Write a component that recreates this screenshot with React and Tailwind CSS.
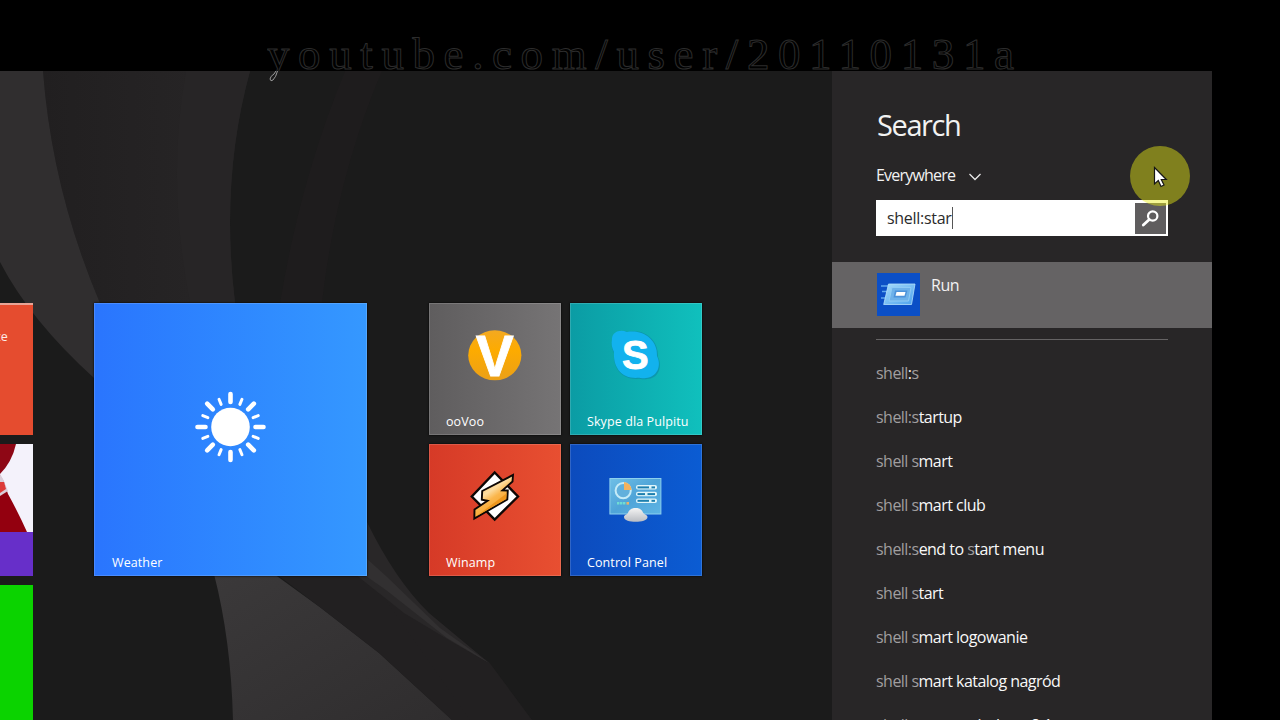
import React, { useState } from 'react';

const suggestions = [
  [['shell', 0], [':', 1], ['s', 0]],
  [['shell:s', 0], ['tartup', 1]],
  [['shell s', 0], ['mart', 1]],
  [['shell s', 0], ['mart club', 1]],
  [['shell:s', 0], ['end to ', 1], ['s', 0], ['tart menu', 1]],
  [['shell s', 0], ['tart', 1]],
  [['shell s', 0], ['mart logowanie', 1]],
  [['shell s', 0], ['mart katalog nagród', 1]],
  [['shell:s', 0], ['tartup windows 8.1', 1]],
];

const Wallpaper = () => (
  <svg className="absolute inset-0" width="832" height="649" viewBox="0 71 832 649">
    <defs>
      <linearGradient id="fold" x1="0" x2="1">
        <stop offset="0" stopColor="#211f20" />
        <stop offset="1" stopColor="#282627" />
      </linearGradient>
      <linearGradient id="leaf" x1="0" x2="1" y2="1">
        <stop offset="0" stopColor="#3b393a" />
        <stop offset="1" stopColor="#2f2d2e" />
      </linearGradient>
    </defs>
    <path d="M345 71H382Q336 180 322 303H280Q300 180 345 71Z" fill="#1e1c1d" />
    <path d="M43 71H250Q220 180 235 303H100Q52 190 43 71Z" fill="url(#fold)" />
    <path d="M186 71Q166 180 190 303H235Q220 180 250 71Z" fill="#272526" />
    <path d="M0 71H43Q52 190 100 303Q130 390 180 450L94 378Q30 320 0 262Z" fill="#302e2f" />
    <path d="M270 570Q430 680 452 720H532L489 662L366 570Z" fill="#222021" />
    <path d="M214 574Q231 640 233 720H452L379 653L321 608L274 574Z" fill="url(#leaf)" />
    <path d="M274 572L321 608L379 653L452 720H470L366 572Z" fill="#222021" />
    <path d="M366 520Q395 580 429 613L489 663L454 643L404 613L355 574Z" fill="#292728" />
    <path d="M366 558L386 576L440 628L489 663L447 638L386 590L366 576Z" fill="#323031" />
  </svg>
);

const WeatherIcon = () => (
  <svg width="72" height="72" viewBox="-35.5 -36 72 72" stroke="#fff" strokeLinecap="round">
    <circle r="19.3" fill="#fff" stroke="none" />
    {[0, 45, 90, 135, 180, 225, 270, 315].map((a) => (
      <g key={a}>
        <path d="M0 -25V-33" strokeWidth="4.6" transform={`rotate(${a})`} />
        <path d="M0 -24.5V-30" strokeWidth="3" transform={`rotate(${a + 22.5})`} />
      </g>
    ))}
  </svg>
);

const OovooIcon = () => (
  <svg width="56" height="56" viewBox="38 24 56 56">
    <defs>
      <linearGradient id="oovoo" y1="0" y2="1" x2="0">
        <stop offset="0" stopColor="#f3a921" />
        <stop offset="0.4" stopColor="#fdab00" />
        <stop offset="1" stopColor="#eba018" />
      </linearGradient>
    </defs>
    <ellipse cx="65.8" cy="52.3" rx="26.6" ry="25" fill="url(#oovoo)" />
    <text x="65.8" y="72.5" textAnchor="middle" fill="#fff" stroke="#fff" strokeWidth="0.8" fontSize="57" fontWeight="700" fontFamily="Liberation Sans, sans-serif">V</text>
  </svg>
);

const SkypeIcon = () => (
  <svg width="56" height="56" viewBox="38 24 56 56">
    <path d="M42 37C42 30 50 26 58 29C74 25 89 37 88 54C93 64 88 76 77 76C72 77 69 75 67 76C51 76 43 65 44 50C42 46 41 42 42 37Z" fill="#0b86a8" opacity="0.6" />
    <path d="M42 36C42 29 50 26 57 29C73 26 88 37 87 53C92 63 87 74 76 75C72 76 69 74 66 75C51 75 43 64 44 49C42 45 41 41 42 36Z" fill="#12b2ee" />
    <text x="65.4" y="66" textAnchor="middle" fill="#fff" stroke="#fff" strokeWidth="0.8" fontSize="40" fontWeight="700" fontFamily="Liberation Sans, sans-serif">S</text>
  </svg>
);

const WinampIcon = () => (
  <svg width="56" height="56" viewBox="38 24 56 56">
    <defs>
      <linearGradient id="bolt" x1="0" x2="0.6" y2="1">
        <stop offset="0" stopColor="#f6a02c" />
        <stop offset="0.45" stopColor="#fcdca0" />
        <stop offset="0.6" stopColor="#fbb64c" />
        <stop offset="1" stopColor="#f19a1a" />
      </linearGradient>
    </defs>
    <path d="M65.7 28.5L89 52.5L65.7 75.5L42.8 52.5Z" fill="#fff" stroke="#0d0705" strokeWidth="2.4" />
    <path d="M84 31L83.5 37.5L73.5 46.3L78.8 46.5L78.3 55.5L45.3 74.5L45.5 65.5L58.5 56.7L52.8 55.7L53.2 47Z" fill="url(#bolt)" stroke="#0d0705" strokeWidth="1.9" />
    <path d="M77.5 49.5L77 55L47 72.5Z" fill="#ee961c" />
  </svg>
);

const ControlPanelIcon = () => (
  <svg width="56" height="56" viewBox="38 24 56 56">
    <defs>
      <linearGradient id="screen" x1="0" x2="1" y2="1">
        <stop offset="0" stopColor="#6fbfe6" />
        <stop offset="0.5" stopColor="#4fa4d8" />
        <stop offset="1" stopColor="#5db4e4" />
      </linearGradient>
      <linearGradient id="dome" y1="0" y2="1" x2="0">
        <stop offset="0" stopColor="#f4f4f4" />
        <stop offset="1" stopColor="#b9bcc2" />
      </linearGradient>
    </defs>
    <rect x="39.9" y="34.5" width="51" height="35.5" fill="url(#screen)" stroke="#8dd0ee" />
    <circle cx="53.2" cy="46.6" r="7.6" fill="#62b0dc" stroke="#c5ebf7" strokeWidth="2" />
    <path d="M54 46V38A8 8 0 0 1 61.5 46Z" fill="#f6b25c" />
    {[43.3, 50, 56.7].map((y) => (
      <g key={y}>
        <rect x="66" y={y - 2.2} width="21" height="4.4" rx="2" fill="#e0f5fa" />
        <rect x="67.5" y={y - 0.9} width="17.5" height="2" fill="#1d7fae" />
        <rect x={y === 50 ? 75 : 79} y={y - 1.4} width="2.5" height="2.8" fill="#d9f3fa" />
      </g>
    ))}
    <path d="M47 59.3H56" stroke="#6fdcd3" strokeWidth="2.6" strokeDasharray="2.4 0.6" />
    <path d="M56.5 59.3H59" stroke="#e9b46a" strokeWidth="2.6" />
    <path d="M54 73C54 71 57 70.5 58 69C59 65.5 62 64 65.7 64S72 65.5 73.3 69C74.5 70.5 77.5 71 77.5 73C77.5 76.5 71.5 77.7 65.7 77.7S54 76.5 54 73Z" fill="url(#dome)" />
  </svg>
);

const RunIcon = () => (
  <svg className="bg-[#0b4fc6]" width="43" height="43" viewBox="0 0 43 43">
    <defs>
      <linearGradient id="run" x1="0" x2="1" y2="1">
        <stop offset="0" stopColor="#a6dbfa" />
        <stop offset="1" stopColor="#4da3ee" />
      </linearGradient>
    </defs>
    <path d="M4 13H13M5 18.5H12M4 25H11" stroke="#5ea6ee" strokeWidth="1.3" />
    <path d="M11.5 11H38L34.5 31.5H6.7Z" fill="url(#run)" stroke="#b5e2fb" strokeWidth="0.8" />
    <path d="M15 14.5H34L31.5 28H12Z" fill="#6db1ea" stroke="#8fcbf5" strokeWidth="1" />
    <path d="M18 17.5H30.5L28.5 24.5H16.5Z" fill="#4c92da" />
    <path d="M19.5 19H28.5L27.5 22.7H18.5Z" fill="#fff" />
  </svg>
);

const Tile = ({ label, className, children }) => (
  <div className={`flex h-[132px] w-[132px] flex-col items-center pt-6 shadow-[0_0_2px_#000] outline outline-1 -outline-offset-1 outline-white/15 ${className}`}>
    {children}
    <span className="mt-auto w-full whitespace-nowrap pb-1 pl-[17px] text-[12.5px] leading-[18px] tracking-[0.1px] text-white">{label}</span>
  </div>
);

const StartScreen = () => (
  <main className="relative w-[832px] overflow-hidden bg-[#1b1b1b]">
    <Wallpaper />
    <div className="relative flex items-start pt-[232px]">
      <div className="flex w-[33px] flex-col gap-[9px] overflow-hidden">
        <div className="h-[132px] border-t-2 border-[#e9a496] bg-[#e54c2f] pt-[23px] text-[12.5px] leading-[18px] text-white/90">
          <span className="-ml-[5px] block">że</span>
        </div>
        <div className="flex h-[132px] flex-col bg-[#672fc9]">
          <svg width="33" height="88" viewBox="0 0 33 88">
            <rect width="33" height="88" fill="#f4f2fb" />
            <path d="M0 0H16Q12 18 0 30Z" fill="#8e0715" />
            <path d="M0 31L4 38L8 50Q18 68 27 88H0Z" fill="#93000f" />
            <path d="M0 30L3 35L8 47L0 52Z" fill="#d9cdd8" />
            <path d="M0 38L4 38L6 45L0 49Z" fill="#dd3a38" />
          </svg>
        </div>
        <div className="h-[136px] bg-[#0bd300]" />
      </div>

      <div className="ml-[61px] flex h-[273px] w-[273px] flex-col items-center bg-linear-to-r from-[#2a75fe] to-[#3598ff] pt-[88px] shadow-[0_0_2px_#000] outline outline-1 -outline-offset-1 outline-white/15">
        <WeatherIcon />
        <span className="mt-auto w-full pb-1 pl-[18px] text-[12.5px] leading-[18px] tracking-[0.1px] text-white">Weather</span>
      </div>

      <div className="ml-[62px] grid grid-cols-[132px_132px] gap-[9px]">
        <Tile label="ooVoo" className="bg-linear-to-r from-[#5f5d5e] to-[#767475]"><OovooIcon /></Tile>
        <Tile label="Skype dla Pulpitu" className="bg-linear-to-r from-[#0b9ca4] to-[#10c0bd]"><SkypeIcon /></Tile>
        <Tile label="Winamp" className="bg-linear-to-r from-[#d63a27] to-[#e84f31]"><WinampIcon /></Tile>
        <Tile label="Control Panel" className="bg-linear-to-r from-[#0c4bbd] to-[#0b5cd3]"><ControlPanelIcon /></Tile>
      </div>
    </div>
  </main>
);

const SearchPanel = () => {
  const [query, setQuery] = useState('shell:star');

  return (
    <aside className="flex w-[380px] flex-col overflow-hidden bg-[#282627] text-[16px] text-[#f2f2f2]">
      <h1 className="mt-[34px] shrink-0 pl-[45px] text-[29px] leading-[40px] tracking-[-1.4px]">Search</h1>
      <button className="mt-[18px] flex shrink-0 items-center gap-[14px] pl-[44px] leading-6 tracking-[-0.8px]">
        Everywhere
        <svg className="mt-1" width="12" height="8" viewBox="0 0 12 8" fill="none" stroke="#e8e8e8" strokeWidth="1.3">
          <path d="M0.5 1L6 6.5L11.5 1" />
        </svg>
      </button>
      <div className="mt-[13px] ml-[44px] flex h-9 w-[292px] shrink-0 items-center bg-white pr-[2px] pl-[11px]">
        <div className="flex flex-1 items-center text-[#2b2b2b]">
          <input
            type="text"
            value={query}
            onChange={(e) => setQuery(e.target.value)}
            className="w-[65px] tracking-[-0.3px] outline-none"
          />
          <span className="h-[22px] w-px bg-[#555]" />
        </div>
        <button className="flex h-[31px] w-[31px] items-center justify-center bg-[#5f5d5e]">
          <svg width="19" height="19" viewBox="0 0 19 19" fill="none" stroke="#fff">
            <circle cx="11.7" cy="7" r="4.7" strokeWidth="2.2" />
            <path d="M8.3 10.5L2.3 16" strokeWidth="2.8" strokeLinecap="round" />
          </svg>
        </button>
      </div>

      <div className="mt-[26px] flex h-[66px] shrink-0 gap-[11px] bg-[#656364] pt-[11px] pl-[45px]">
        <RunIcon />
        <span className="leading-6 tracking-[-0.5px]">Run</span>
      </div>

      <hr className="mt-[11px] ml-[44px] w-[292px] shrink-0 border-[#656364]" />
      <ul className="mt-[11px] ml-[44px]">
        {suggestions.map((parts, i) => (
          <li key={i} className="h-11 whitespace-pre leading-[44px] tracking-[-0.53px]">
            {parts.map(([text, suggested], j) => (
              <span key={j} className={suggested ? 'text-[#f8f8f8]' : 'text-[#a09e9f]'}>{text}</span>
            ))}
          </li>
        ))}
      </ul>
    </aside>
  );
};

const Watermark = () => (
  <div className="pointer-events-none absolute top-[27px] left-[267px] whitespace-nowrap font-['Liberation_Serif',serif] text-[45px] leading-[54px] tracking-[8.6px] text-transparent">
    <p className="[-webkit-text-stroke:1px_#2c2c2c] [clip-path:inset(0_0_10px_0)]">youtube.com/user/20110131a</p>
  </div>
);

const App = () => (
  <div className="relative flex h-[720px] w-[1280px] flex-col overflow-hidden bg-black font-['Open_Sans','Noto_Sans',sans-serif]">
    <header className="h-[71px] shrink-0" />
    <div className="flex h-[649px]">
      <StartScreen />
      <SearchPanel />
    </div>
    <Watermark />
    {/* tail of the y, brighter where it crosses the start screen */}
    <svg className="absolute top-[71px] left-[268px]" width="14" height="12" viewBox="0 0 14 12" fill="none" stroke="#9a9a9a">
      <path d="M8 0L6 3Q2.5 5 2 8Q2.5 11 5 9Q8 6 9.5 0" />
    </svg>
    <div className="absolute top-[146px] left-[1130px] h-[60px] w-[60px] rounded-full bg-[#ebf014]/45">
      <svg className="absolute top-[20px] left-[23px]" width="15" height="23" viewBox="0 0 15 23">
        <path d="M1.5 1.5V18L5.3 14.5L8 20.5L11 19L8.3 13.5H13.3Z" fill="#fff" stroke="#151515" strokeWidth="1.2" />
      </svg>
    </div>
  </div>
);

export default App;
